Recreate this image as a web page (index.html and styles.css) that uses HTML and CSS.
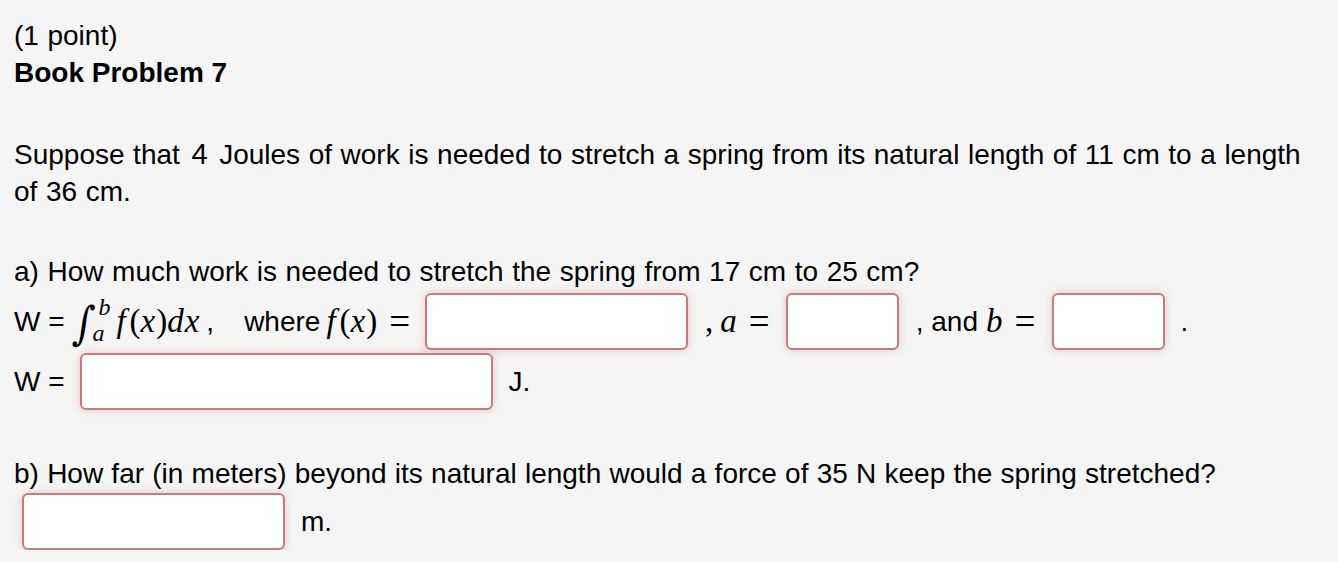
FILE: index.html
```html
<!DOCTYPE html>
<html>
<head>
<meta charset="utf-8">
<link rel="stylesheet" href="styles.css">
</head>
<body>
<div class="problem">
  <div class="line">(1 point)</div>
  <div class="line bold">Book Problem 7</div>
  <div class="para intro">
    <div class="line ws-a">Suppose that <span class="num">4</span> Joules of work is needed to stretch a spring from its natural length of 11 cm to a length</div>
    <div class="line">of 36 cm.</div>
  </div>
  <div class="para parta">
    <div class="line">a) How much work is needed to stretch the spring from 17 cm to 25 cm?</div>
    <div class="row">
      <span class="lbl">W =</span>
      <span class="integral"><span class="intsign">∫</span><span class="limits"><span class="sup m">b</span><span class="sub m">a</span></span></span>
      <span class="m f">f</span><span class="mr">(</span><span class="m x">x</span><span class="mr">)</span><span class="m d">d</span><span class="m x">x</span>
      <span class="comma1">,</span>
      <span class="where">where</span><span class="m f">f</span><span class="mr">(</span><span class="m x">x</span><span class="mr">)</span><span class="eq eq1">=</span>
      <span class="box w263 gap-fx"></span>
      <span class="mr comma2">,</span><span class="m aa">a</span><span class="eq">=</span>
      <span class="box w113 gap-a"></span>
      <span class="andb">, and</span><span class="m bb">b</span><span class="eq">=</span>
      <span class="box w113 gap-b"></span>
      <span class="dot">.</span>
    </div>
    <div class="row row2">
      <span class="lbl">W =</span>
      <span class="box w413 gap-w"></span>
      <span class="unit">J.</span>
    </div>
  </div>
  <div class="para partb">
    <div class="line ws-b">b) How far (in meters) beyond its natural length would a force of 35 N keep the spring stretched?</div>
    <div class="row row3">
      <span class="box w263 gap-m"></span>
      <span class="unit">m.</span>
    </div>
  </div>
</div>
</body>
</html>
```

FILE: styles.css
```css
html, body {
  margin: 0;
  padding: 0;
  background: #f5f5f5;
}
body {
  font-family: "Liberation Sans", Arial, sans-serif;
  font-size: 28px;
  color: #000;
}
.problem {
  padding: 17px 14px 0 14px;
}
.line {
  height: 37px;
  line-height: 37px;
  white-space: nowrap;
  word-spacing: 0.8px;
}
.ws-a {
  word-spacing: 0.8px;
}
.ws-b {
  word-spacing: 0.45px;
}
.bold {
  font-weight: bold;
  word-spacing: 0;
}
.num {
  font-family: "Liberation Sans", sans-serif;
  font-size: 29px;
  margin: 0 3px 0 3px;
}
.intro {
  margin-top: 45px;
}
.parta {
  margin-top: 43px;
}
.row {
  display: flex;
  align-items: center;
  height: 57px;
  margin-top: 3px;
  white-space: nowrap;
}
.row2 {
  margin-top: 3px;
}
.partb {
  margin-top: 45px;
}
.row3 {
  margin-top: 1px;
}
.m {
  font-family: "Liberation Serif", "Times New Roman", serif;
  font-style: italic;
  font-size: 33px;
}
.mr {
  font-family: "Liberation Serif", "Times New Roman", serif;
  font-size: 33px;
}
.m.f {
  padding-right: 4px;
  margin-left: 1px;
}
.m.x {
  padding-right: 1px;
}
.m.d {
  padding-right: 1px;
}
.integral {
  display: inline-flex;
  align-items: center;
  margin-left: 9px;
  margin-right: 5px;
}
.intsign {
  font-family: "DejaVu Serif", serif;
  font-style: italic;
  font-size: 38px;
  transform: scaleY(1.2) skewX(-8deg);
  display: inline-block;
  margin-top: 2px;
}
.limits {
  display: inline-flex;
  flex-direction: column;
  line-height: 1;
  margin-left: -3px;
}
.limits .sup {
  font-size: 24px;
  margin-left: 8px;
  margin-top: -18px;
}
.limits .sub {
  font-size: 24px;
  margin-left: 2px;
  margin-top: 2px;
  margin-bottom: -14px;
}
.comma1 {
  margin-left: 6px;
  margin-right: 30px;
}
.where {
  margin-right: 5px;
}
.eq {
  font-family: "Liberation Serif", "Times New Roman", serif;
  font-size: 37px;
  margin-left: 12px;
}
.eq1 {
  margin-left: 12px;
}
.box {
  display: inline-block;
  box-sizing: border-box;
  height: 57px;
  background: #fff;
  border: 2px solid #c97a7a;
  border-radius: 6px;
  box-shadow: 0 0 8px rgba(200, 110, 110, 0.35);
}
.w263 { width: 263px; }
.w113 { width: 113px; }
.w413 { width: 413px; }
.gap-fx { margin-left: 15px; }
.comma2 { margin-left: 17px; margin-right: 7px; }
.gap-a { margin-left: 16px; }
.andb { margin-left: 17px; margin-right: 8px; }
.gap-b { margin-left: 17px; }
.dot { margin-left: 15px; }
.gap-w { margin-left: 15px; }
.unit { margin-left: 16px; }
.gap-m { margin-left: 8px; }
```
